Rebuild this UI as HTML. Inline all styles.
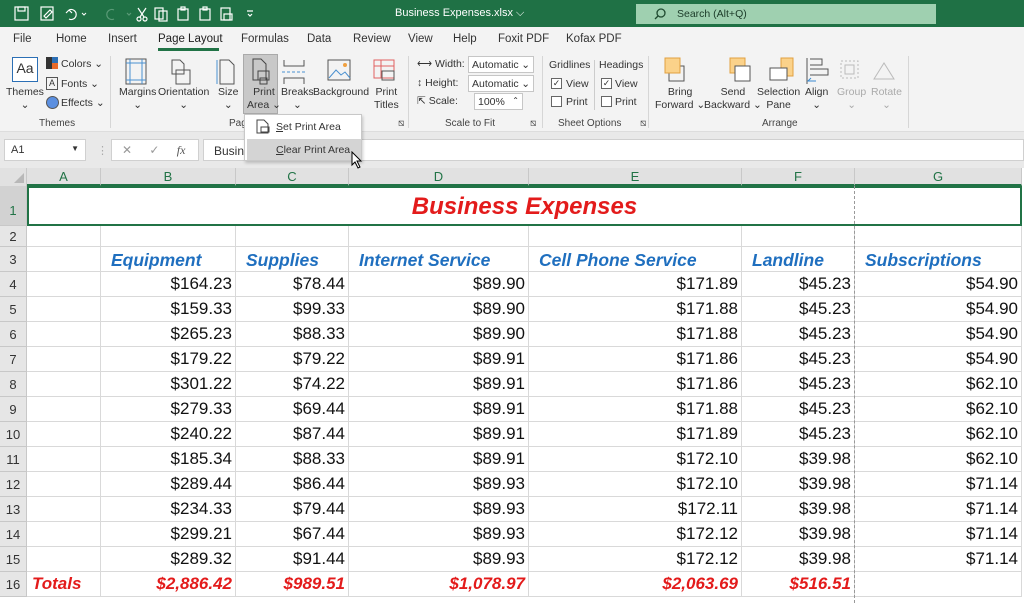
<!DOCTYPE html>
<html><head><meta charset="utf-8">
<style>
*{margin:0;padding:0;box-sizing:border-box}
body{width:1024px;height:603px;overflow:hidden;background:#fff;font-family:"Liberation Sans",sans-serif;position:relative;font-size:11px;color:#333}
.a{position:absolute}
#title{left:0;top:0;width:1024px;height:27px;background:#1f7145}
#tabs{left:0;top:27px;width:1024px;height:25px;background:#f3f3f3}
#tabs span{position:absolute;top:6px;font-size:11.5px;color:#333}
#rib{left:0;top:52px;width:1024px;height:80px;background:#f3f3f3;border-bottom:1px solid #ddd}
.lbl{position:absolute;font-size:10.5px;color:#333;text-align:center;line-height:13px}
.grp{position:absolute;top:118px;font-size:10px;color:#444}
.sep{position:absolute;top:56px;width:1px;height:72px;background:#d6d6d6}
#gap{left:0;top:132px;width:1024px;height:36px;background:#e9e9e9}
.cell{position:absolute;border-right:1px solid #d9d9d9;border-bottom:1px solid #d9d9d9;font-size:17px;color:#111;text-align:right;padding-right:3px;line-height:24px;white-space:nowrap;overflow:visible}
.ch{position:absolute;top:168px;height:18px;background:#e1e1e1;border-right:1px solid #c8c8c8;color:#217346;font-size:13px;text-align:center;line-height:18px;border-bottom:2px solid #217346}
.rh{position:absolute;left:0;width:27px;background:#e6e6e6;border-bottom:1px solid #c8c8c8;border-right:1px solid #c8c8c8;font-size:13px;text-align:center;color:#333}
.hd{color:#1f6fbf;font-weight:bold;font-style:italic;text-align:left;padding-left:10px;font-size:17.5px}
.tot{color:#e31b1b;font-weight:bold;font-style:italic;font-size:17px}
</style></head><body>
<div id="title" class="a">
 <svg class="a" style="left:14px;top:6px" width="250" height="16" fill="none" stroke="#fff" stroke-width="1.2">
  <rect x="1" y="1" width="13" height="13"/><rect x="4" y="1" width="7" height="4"/>
  <rect x="27" y="1" width="12" height="13"/><path d="M30 10l6-6 2 2-6 6z"/>
  <path d="M55 4a5 5 0 1 1 0 9M55 4l-3 3M55 4l3 3" /><path d="M68 7l2 2 2-2" stroke-width="1"/>
  <path d="M100 4a5 5 0 1 0 0 9" stroke="#5a9a77"/><path d="M113 7l2 2 2-2" stroke="#5a9a77"/>
  <path d="M124 2l6 9M132 2l-6 9"/><circle cx="125" cy="13" r="2"/><circle cx="131" cy="13" r="2"/>
  <rect x="141" y="2" width="8" height="11"/><rect x="145" y="5" width="8" height="10"/>
  <rect x="164" y="3" width="10" height="11"/><rect x="167" y="1" width="4" height="3"/>
  <rect x="186" y="3" width="10" height="11"/><rect x="189" y="1" width="4" height="3"/>
  <rect x="207" y="2" width="9" height="12"/><rect x="210" y="8" width="8" height="6"/>
  <path d="M233 5h6M234 8l2 2 2-2"/>
 </svg>
 <div class="a" style="left:395px;top:7px;color:#fff;font-size:11px">Business Expenses.xlsx ⌵</div>
 <div class="a" style="left:636px;top:4px;width:300px;height:20px;background:#9fd0b0">
  <svg class="a" style="left:18px;top:4px" width="12" height="12" fill="none" stroke="#1f4a30" stroke-width="1.3"><circle cx="7" cy="5" r="4"/><path d="M4 8l-3 3"/></svg>
  <div class="a" style="left:41px;top:4px;font-size:10.5px;color:#1b3a28">Search (Alt+Q)</div>
 </div>
</div>
<div id="tabs" class="a">
 <span style="left:13px">File</span><span style="left:56px">Home</span><span style="left:108px">Insert</span>
 <span style="left:158px;color:#222">Page Layout</span><span style="left:241px">Formulas</span><span style="left:307px">Data</span>
 <span style="left:353px">Review</span><span style="left:408px">View</span><span style="left:453px">Help</span>
 <span style="left:498px">Foxit PDF</span><span style="left:566px">Kofax PDF</span>
 <div class="a" style="left:158px;top:21px;width:61px;height:3px;background:#217346"></div>
</div>
<div id="rib" class="a"></div>
<!-- Themes group -->
<div class="a" style="left:12px;top:57px;width:26px;height:25px;border:1px solid #2b6fb5;background:#fff;font-size:14px;text-align:center;color:#333;line-height:20px">Aa</div>
<div class="lbl" style="left:6px;top:86px">Themes<br>⌄</div>
<div class="a" style="left:46px;top:57px;width:12px;height:12px;background:linear-gradient(90deg,#333 50%,#2b6fb5 50%)"></div>
<div class="a" style="left:52px;top:63px;width:6px;height:6px;background:#e86a2a"></div>
<div class="lbl" style="left:61px;top:58px">Colors ⌄</div>
<div class="a" style="left:46px;top:77px;width:12px;height:13px;border:1px solid #555;font-size:9px;text-align:center;line-height:11px">A</div>
<div class="lbl" style="left:61px;top:78px">Fonts ⌄</div>
<div class="a" style="left:46px;top:96px;width:13px;height:13px;border-radius:50%;background:#5b8fe0;border:1px solid #555"></div>
<div class="lbl" style="left:61px;top:97px">Effects ⌄</div>
<div class="grp" style="left:39px">Themes</div>
<div class="sep" style="left:110px"></div>
<!-- Page setup -->
<svg class="a" style="left:124px;top:58px" width="280" height="30" fill="none" stroke="#555" stroke-width="1">
 <rect x="2" y="1" width="20" height="25"/><path d="M6 1v25M18 1v25M2 5h20M2 22h20" stroke="#4a90d0"/>
 <path d="M48 2h8l4 4v10h-12z"/><path d="M52 12h14v14h-14z"/>
 <path d="M96 2h9l5 5v19h-14z"/><path d="M93 2v24" stroke="#4a90d0"/>
 <path d="M133 1h8l5 5v16h-13z"/><rect x="138" y="13" width="11" height="9"/><rect x="140" y="20" width="7" height="6"/>
 <path d="M160 2v6h20v-6M160 26v-6h20v6"/><path d="M158 14h24" stroke="#4a90d0" stroke-dasharray="3 2"/>
 <rect x="204" y="2" width="22" height="20"/><path d="M205 20l7-8 5 5 4-3 5 6" stroke="#4a90d0"/><circle cx="221" cy="7" r="2" fill="#f0a040" stroke="none"/>
 <rect x="250" y="2" width="20" height="18" stroke="#e06060"/><path d="M250 8h20M257 2v18" stroke="#e06060"/><rect x="258" y="13" width="12" height="9"/>
</svg>
<div class="a" style="left:243px;top:54px;width:35px;height:60px;background:#c8c8c8;border:1px solid #aaa"></div>
<svg class="a" style="left:251px;top:58px" width="24" height="28" fill="none" stroke="#444"><path d="M2 1h8l5 5v16h-13z"/><rect x="7" y="13" width="11" height="9"/><rect x="9" y="20" width="7" height="6"/></svg>
<div class="lbl" style="left:119px;top:86px">Margins<br>⌄</div>
<div class="lbl" style="left:158px;top:86px">Orientation<br>⌄</div>
<div class="lbl" style="left:218px;top:86px">Size<br>⌄</div>
<div class="lbl" style="left:247px;top:86px">Print<br>Area ⌄</div>
<div class="lbl" style="left:281px;top:86px">Breaks<br>⌄</div>
<div class="lbl" style="left:313px;top:86px">Background</div>
<div class="lbl" style="left:374px;top:86px">Print<br>Titles</div>
<div class="grp" style="left:229px">Pag</div>
<div class="grp" style="left:398px">⧅</div>
<div class="sep" style="left:408px"></div>
<!-- Scale to fit -->
<div class="lbl" style="left:417px;top:58px">⟷ Width:</div>
<div class="lbl" style="left:417px;top:77px">↕ Height:</div>
<div class="lbl" style="left:417px;top:95px">⇱ Scale:</div>
<div class="a" style="left:468px;top:56px;width:66px;height:17px;background:#fff;border:1px solid #c6c6c6;font-size:10.5px;padding:2px 3px">Automatic <span style="float:right">⌄</span></div>
<div class="a" style="left:468px;top:75px;width:66px;height:17px;background:#fff;border:1px solid #c6c6c6;font-size:10.5px;padding:2px 3px">Automatic <span style="float:right">⌄</span></div>
<div class="a" style="left:474px;top:93px;width:49px;height:17px;background:#fff;border:1px solid #c6c6c6;font-size:10.5px;padding:2px 3px">100% <span style="float:right;font-size:8px">⌃</span></div>
<div class="grp" style="left:445px">Scale to Fit</div>
<div class="grp" style="left:530px">⧅</div>
<div class="sep" style="left:542px"></div>
<!-- Sheet options -->
<div class="lbl" style="left:549px;top:59px">Gridlines</div>
<div class="lbl" style="left:599px;top:59px">Headings</div>
<div class="a" style="left:551px;top:78px;width:11px;height:11px;border:1px solid #666;background:#fff;font-size:9px;line-height:9px;text-align:center">✓</div>
<div class="lbl" style="left:566px;top:78px">View</div>
<div class="a" style="left:551px;top:96px;width:11px;height:11px;border:1px solid #666;background:#fff"></div>
<div class="lbl" style="left:566px;top:96px">Print</div>
<div class="a" style="left:601px;top:78px;width:11px;height:11px;border:1px solid #666;background:#fff;font-size:9px;line-height:9px;text-align:center">✓</div>
<div class="lbl" style="left:615px;top:78px">View</div>
<div class="a" style="left:601px;top:96px;width:11px;height:11px;border:1px solid #666;background:#fff"></div>
<div class="lbl" style="left:615px;top:96px">Print</div>
<div class="a" style="left:594px;top:60px;width:1px;height:50px;background:#ccc"></div>
<div class="grp" style="left:558px">Sheet Options</div>
<div class="grp" style="left:640px">⧅</div>
<div class="sep" style="left:648px"></div>
<!-- Arrange -->
<svg class="a" style="left:664px;top:57px" width="240" height="30" fill="none" stroke="#555">
 <rect x="5" y="9" width="15" height="15"/><rect x="1" y="1" width="15" height="15" fill="#fbd28a" stroke="#e0a040"/>
 <rect x="66" y="1" width="15" height="15" fill="#fbd28a" stroke="#e0a040"/><rect x="71" y="9" width="15" height="15" fill="#fff"/>
 <rect x="117" y="1" width="12" height="18" fill="#fbd28a" stroke="#e0a040"/><rect x="106" y="11" width="17" height="12" fill="#fff"/>
 <path d="M143 1v26M146 2h12v6h-12M146 12h18v6h-18"/><path d="M152 24h-8l3-3" stroke="#3a8ad0"/>
 <rect x="177" y="4" width="17" height="17" stroke="#bbb" stroke-dasharray="2 2"/><rect x="181" y="8" width="9" height="9" stroke="#bbb"/>
 <path d="M210 22l10-16 10 16z" stroke="#bbb"/>
</svg>
<div class="lbl" style="left:655px;top:86px">Bring<br>Forward ⌄</div>
<div class="lbl" style="left:704px;top:86px">Send<br>Backward ⌄</div>
<div class="lbl" style="left:757px;top:86px">Selection<br>Pane</div>
<div class="lbl" style="left:805px;top:86px">Align<br>⌄</div>
<div class="lbl" style="left:837px;top:86px;color:#aaa">Group<br>⌄</div>
<div class="lbl" style="left:871px;top:86px;color:#aaa">Rotate<br>⌄</div>
<div class="grp" style="left:762px">Arrange</div>
<div class="sep" style="left:908px"></div>
<div id="gap" class="a"></div>
<!-- formula bar -->
<div class="a" style="left:4px;top:139px;width:82px;height:22px;background:#fff;border:1px solid #d0d0d0;font-size:11px;padding:4px 6px">A1<span style="float:right;font-size:8px">▼</span></div>
<div class="a" style="left:97px;top:144px;color:#aaa">⋮</div>
<div class="a" style="left:111px;top:139px;width:88px;height:22px;background:#fff;border:1px solid #d0d0d0;color:#999;font-size:12px;padding:3px 10px;word-spacing:14px">✕ ✓ <i style="font-family:'Liberation Serif';color:#555">fx</i></div>
<div class="a" style="left:203px;top:139px;width:821px;height:22px;background:#fff;border:1px solid #d0d0d0;font-size:12px;padding:4px 10px">Busine</div>
<!-- column headers -->
<div class="a" style="left:0;top:168px;width:27px;height:18px;background:#e1e1e1;border-right:1px solid #c8c8c8"></div>
<div class="a" style="left:14px;top:173px;width:0;height:0;border-left:10px solid transparent;border-bottom:10px solid #b8b8b8"></div>
<div class="ch" style="left:27px;width:74px">A</div>
<div class="ch" style="left:101px;width:135px">B</div>
<div class="ch" style="left:236px;width:113px">C</div>
<div class="ch" style="left:349px;width:180px">D</div>
<div class="ch" style="left:529px;width:213px">E</div>
<div class="ch" style="left:742px;width:113px">F</div>
<div class="ch" style="left:855px;width:167px">G</div>
<div class="ch" style="left:1022px;width:2px;background:#fff;border:0"></div>
<div id="grid"></div>
<script>
var cols=[27,101,236,349,529,742,855,1022];
var rows=[186,226,247];for(var i=3;i<=16;i++)rows.push(247+25*(i-2));
var data=[
["164.23","78.44","89.90","171.89","45.23","54.90"],
["159.33","99.33","89.90","171.88","45.23","54.90"],
["265.23","88.33","89.90","171.88","45.23","54.90"],
["179.22","79.22","89.91","171.86","45.23","54.90"],
["301.22","74.22","89.91","171.86","45.23","62.10"],
["279.33","69.44","89.91","171.88","45.23","62.10"],
["240.22","87.44","89.91","171.89","45.23","62.10"],
["185.34","88.33","89.91","172.10","39.98","62.10"],
["289.44","86.44","89.93","172.10","39.98","71.14"],
["234.33","79.44","89.93","172.11","39.98","71.14"],
["299.21","67.44","89.93","172.12","39.98","71.14"],
["289.32","91.44","89.93","172.12","39.98","71.14"]];
var hd=["Equipment","Supplies","Internet Service","Cell Phone Service","Landline","Subscriptions"];
var tot=["$2,886.42","$989.51","$1,078.97","$2,063.69","$516.51",""];
var h="";
for(var r=0;r<16;r++){
 var t=rows[r],ht=rows[r+1]-rows[r];
 h+='<div class="rh" style="top:'+t+'px;height:'+ht+'px;line-height:'+(r==0?ht+10:ht)+'px;'+(r==0?'background:#d2d2d2;color:#217346':'')+'">'+(r+1)+'</div>';
 if(r==0){h+='<div class="a" style="left:27px;top:186px;width:995px;height:40px;border:2px solid #217346;color:#e31b1b;font-weight:bold;font-style:italic;font-size:24px;text-align:center;line-height:38px">Business Expenses</div>';continue;}
 for(var c=0;c<7;c++){
  var txt="",cls="cell";
  if(c>0){
   if(r==2){txt=hd[c-1];cls+=" hd";}
   else if(r>=3&&r<=14)txt="$"+data[r-3][c-1];
   else if(r==15){txt=tot[c-1];cls+=" tot";}
  } else if(r==15){txt="Totals";cls+=" tot";}
  var st='left:'+cols[c]+'px;top:'+t+'px;width:'+(cols[c+1]-cols[c])+'px;height:'+ht+'px;';
  if(c==0&&r==15)st+='text-align:left;padding-left:5px;';
  if(r==2)st+='line-height:26px;';
  h+='<div class="'+cls+'" style="'+st+'">'+txt+'</div>';
 }
}
h+='<div class="a" style="left:854px;top:186px;width:0;height:417px;border-left:1px dashed #999"></div>';
document.getElementById('grid').innerHTML=h;
</script>
<!-- dropdown -->
<div class="a" style="left:244px;top:114px;width:118px;height:47px;background:#fff;border:1px solid #c8c8c8;box-shadow:1px 2px 3px rgba(0,0,0,.2)">
 <svg class="a" style="left:11px;top:4px" width="14" height="16" fill="none" stroke="#444"><path d="M1 1h7l4 4v9h-11z"/><rect x="5" y="8" width="8" height="5"/></svg>
 <div class="a" style="left:31px;top:6px;font-size:10.5px"><u>S</u>et Print Area</div>
 <div class="a" style="left:2px;top:24px;width:114px;height:21px;background:#d4d4d4"></div>
 <div class="a" style="left:31px;top:29px;font-size:10.5px"><u>C</u>lear Print Area</div>
</div>
<svg class="a" style="left:351px;top:151px" width="12" height="18"><path d="M1 1v13l3-3 3 6 2-1-3-6h4z" fill="#fff" stroke="#000"/></svg>
</body></html>
